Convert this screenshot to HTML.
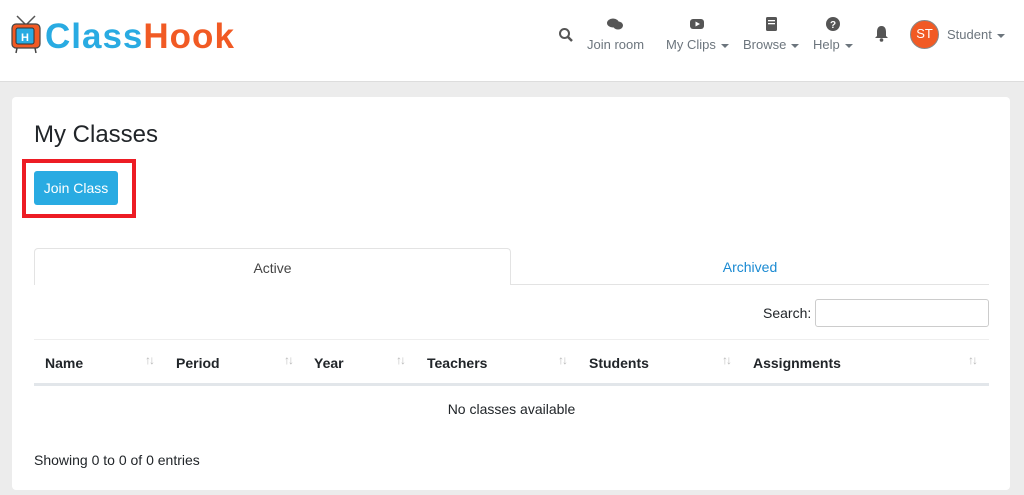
<!DOCTYPE html>
<html><head><meta charset="utf-8"><style>
*{box-sizing:border-box;margin:0;padding:0}
body{width:1024px;height:495px;background:#ececec;font-family:"Liberation Sans",sans-serif;color:#212529;position:relative;overflow:hidden;font-size:14px}
.hdr{position:absolute;left:0;top:0;width:1024px;height:82px;background:#fff;border-bottom:1px solid #ddd}
.abs{position:absolute}
.nav{color:#6c757d;font-size:13px;text-align:center}
.car{display:inline-block;border-left:4px solid transparent;border-right:4px solid transparent;border-top:4px solid #6c757d;vertical-align:middle;margin-left:5px}
.card{position:absolute;left:12px;top:97px;width:998px;height:393px;background:#fff;border-radius:4px}
.th{position:absolute;top:355px;font-weight:bold;font-size:14px}
.ar{position:absolute;top:353px;color:#bbb;font-size:12px;letter-spacing:-2px}
</style></head><body>
<div class="hdr">
 <svg class="abs" style="left:11px;top:14px" width="30" height="40" viewBox="0 0 30 40">
  <line x1="6" y1="2" x2="14" y2="10" stroke="#555" stroke-width="1.5"/><line x1="24" y1="2" x2="16" y2="10" stroke="#555" stroke-width="1.5"/>
  <rect x="1" y="10" width="28" height="24" rx="4" fill="#f15a24" stroke="#444" stroke-width="1.2"/>
  <rect x="5" y="14" width="18" height="16" rx="2" fill="#29abe2" stroke="#333" stroke-width="1"/>
  <text x="14" y="27" font-size="11" font-weight="bold" fill="#fff" text-anchor="middle" font-family="Liberation Sans">H</text>
  <line x1="6" y1="34" x2="5" y2="39" stroke="#444" stroke-width="1.5"/><line x1="24" y1="34" x2="25" y2="39" stroke="#444" stroke-width="1.5"/>
 </svg>
 <div class="abs" style="left:45px;top:16px;font-size:35px;font-weight:bold;letter-spacing:1px;line-height:42px"><span style="color:#29abe2">Class</span><span style="color:#f15a24">Hook</span></div>
 <svg class="abs" style="left:558px;top:27px" width="16" height="16" viewBox="0 0 16 16"><circle cx="6.5" cy="6.5" r="4.5" fill="none" stroke="#555" stroke-width="2"/><line x1="10" y1="10" x2="14" y2="14" stroke="#555" stroke-width="2.5"/></svg>
 <svg class="abs" style="left:607px;top:18px" width="16" height="12" viewBox="0 0 16 12"><ellipse cx="6" cy="5" rx="6" ry="4.5" fill="#555"/><ellipse cx="11" cy="7.5" rx="5" ry="4" fill="#555"/></svg>
 <div class="abs nav" style="left:587px;top:37px">Join room</div>
 <svg class="abs" style="left:690px;top:19px" width="14" height="10"><rect width="14" height="10" rx="3" fill="#555"/><path d="M5.5 2.5 L10 5 L5.5 7.5Z" fill="#fff"/></svg>
 <div class="abs nav" style="left:666px;top:37px">My Clips<span class="car"></span></div>
 <svg class="abs" style="left:766px;top:17px" width="11" height="14"><rect width="11" height="14" rx="1.5" fill="#555"/><rect x="2" y="3" width="7" height="1.3" fill="#fff"/><rect x="2" y="6" width="7" height="1.3" fill="#fff"/></svg>
 <div class="abs nav" style="left:743px;top:37px">Browse<span class="car"></span></div>
 <svg class="abs" style="left:826px;top:17px" width="14" height="14"><circle cx="7" cy="7" r="7" fill="#555"/><text x="7" y="11" font-size="10" font-weight="bold" fill="#fff" text-anchor="middle" font-family="Liberation Sans">?</text></svg>
 <div class="abs nav" style="left:813px;top:37px">Help<span class="car"></span></div>
 <svg class="abs" style="left:874px;top:25px" width="15" height="17" viewBox="0 0 15 17"><path d="M7.5 1C4 1 3 4 3 7v4L1 13h13l-2-2V7c0-3-1-6-4.5-6z" fill="#555"/><circle cx="7.5" cy="15" r="1.8" fill="#555"/></svg>
 <div class="abs" style="left:910px;top:20px;width:29px;height:29px;border-radius:50%;background:#f15a24;border:1.5px solid #888;color:#fff;font-size:13px;text-align:center;line-height:26px">ST</div>
 <div class="abs nav" style="left:947px;top:27px">Student<span class="car"></span></div>
</div>
<div class="card"></div>
<div class="abs" style="left:34px;top:121px;font-size:24px;color:#212529">My Classes</div>
<div class="abs" style="left:22px;top:159px;width:114px;height:59px;border:4px solid #ed1c24"></div>
<div class="abs" style="left:34px;top:171px;width:84px;height:34px;background:#29abe2;border-radius:3px;color:#fff;font-size:14px;text-align:center;line-height:34px">Join Class</div>
<div class="abs" style="left:34px;top:248px;width:477px;height:37px;border:1px solid #e3e3e3;border-bottom:none;border-radius:4px 4px 0 0;text-align:center;line-height:38px;color:#444">Active</div>
<div class="abs" style="left:511px;top:284px;width:478px;height:1px;background:#e3e3e3"></div>
<div class="abs" style="left:511px;top:248px;width:478px;line-height:38px;text-align:center;color:#1a8ad2">Archived</div>
<div class="abs" style="left:763px;top:305px">Search:</div>
<div class="abs" style="left:815px;top:299px;width:174px;height:28px;border:1px solid #ccc;border-radius:3px"></div>
<div class="abs" style="left:34px;top:339px;width:955px;height:1px;background:#eee"></div>
<div class="abs" style="left:34px;top:383px;width:955px;height:3px;background:#e2e6ea"></div>
<div class="th" style="left:45px">Name</div><div class="ar" style="left:145px">↑↓</div>
<div class="th" style="left:176px">Period</div><div class="ar" style="left:284px">↑↓</div>
<div class="th" style="left:314px">Year</div><div class="ar" style="left:396px">↑↓</div>
<div class="th" style="left:427px">Teachers</div><div class="ar" style="left:558px">↑↓</div>
<div class="th" style="left:589px">Students</div><div class="ar" style="left:722px">↑↓</div>
<div class="th" style="left:753px">Assignments</div><div class="ar" style="left:968px">↑↓</div>
<div class="abs" style="left:34px;width:955px;top:401px;text-align:center">No classes available</div>
<div class="abs" style="left:34px;top:452px">Showing 0 to 0 of 0 entries</div>
</body></html>
